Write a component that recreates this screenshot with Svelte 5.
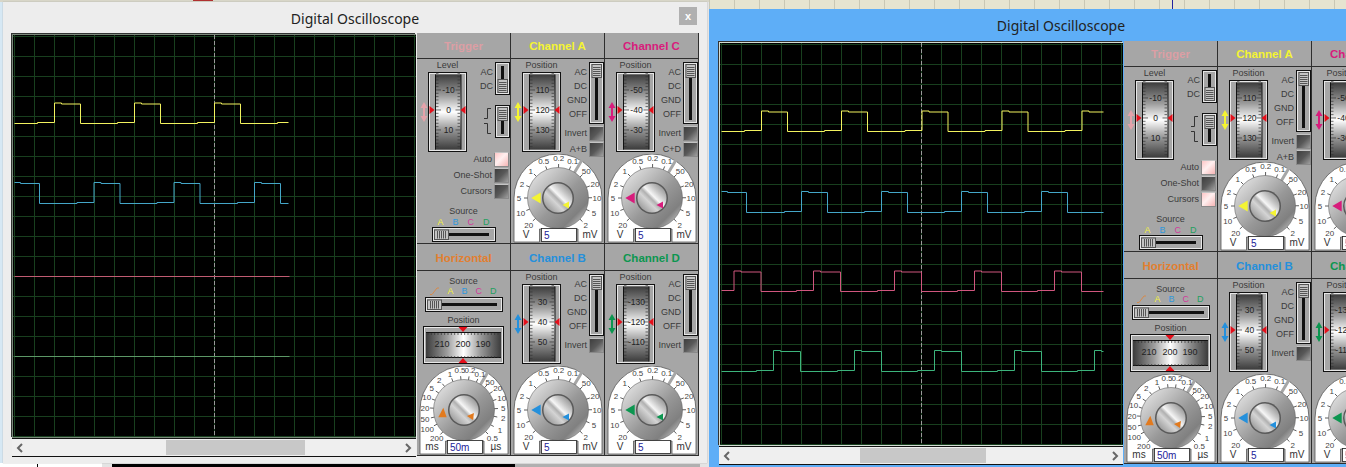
<script>
  const dialLabels = [
    ['0.5',-14.3,-36.7],['0.2',.7,-39.7],['0.1',14.7,-36.7],['1',-27.3,-27.3],['2',-36,-14],['5',-39,0],['10',-37.3,14.7],['20',-29.3,26.7],
    ['50',28.3,-27],['20',37,-14],['10',39,-.3],['5',36,14.7],['2',27.7,26.7]
  ];
  const timeLabels = [
    ['0.5',-4,-40],['0.2',6,-40],['1',-14,-36],['2',-24.7,-30],['5',-32.3,-21.7],['10',-37.3,-12.7],['20',-39,-2.3],['50',-39,9.3],['100',-36.7,19.3],['200',-27.3,28.3],
    ['0.1',16,-36],['50',26,-28.3],['20',33.7,-21.7],['10',37.7,-12.3],['5',39.3,-1.7],['2',39.3,8.3],['1',36,20],['0.5',28.3,28.3]
  ];
  const tick = (x, y, a, b) => { const l = Math.hypot(x, y); return [47+x/l*a, 44+y/l*a, 47+x/l*b, 44+y/l*b]; };

  const bigLeft = '20.3,44 29.7,38.5 29.7,49.5';
  const smallRight = '51.5,51 58,47.5 58,54.5';
  const bigUp = '26.3,41.7 21.3,51.3 29.7,51.3';
  const smallUp = '50,50 57,47 56,54';

  const hGrid = Array.from({ length: 21 }, (_, i) => i * 20 + 1.5);

  function wave(rises, lo, hi, x0, x1, fall = 26) {
    const p = [];
    for (const r of rises) p.push([r-17,lo],[r-17,lo-1],[r,lo-1],[r,hi],[r+7,hi],[r+7,hi+1],[r+fall,hi+1],[r+fall,lo]);
    const out = [];
    for (let i = 0; i < p.length; i++) {
      const [x, y] = p[i];
      if (x < x0 || x > x1) continue;
      if (!out.length) out.push([x0, i > 0 ? p[i-1][1] : y]);
      out.push([x, y]);
    }
    const last = out[out.length - 1];
    out.push([x1, last[1]]);
    return out;
  }
  const toLocal = (pts, ox, oy) => pts.map(([x, y]) => `${x-ox+.5},${y-oy+.5}`).join(' ');

  const traces1 = [
    { c: '#f2f25e', p: toLocal(wave([53,133,213,293],122,101.5,13,287),12,34) },
    { c: '#44a6c8', p: toLocal(wave([12,92.5,172.5,253],202,181,13,287),12,34) },
    { c: '#c05c72', p: toLocal([[13,275],[288,275]],12,34) },
    { c: '#5c9866', p: toLocal([[13,355],[288,355]],12,34) }
  ];
  const traces2 = [
    { c: '#f2f25e', p: toLocal(wave([760,840,920.5,1000.5,1080.5],130,109.5,720,1102),719,42) },
    { c: '#44a6c8', p: toLocal(wave([719,800,880,960,1040],211,190,720,1102),719,42) },
    { c: '#d0567e', p: toLocal(wave([732.5,812,893,973,1053],290,269.5,720,1102,27),719,42) },
    { c: '#3cb47c', p: toLocal(wave([772,853,933,1013,1093],370,349,720,1102,27),719,42) }
  ];
  const ticks = Array.from({ length: 23 }, (_, i) => i * 10 / 3 + 1);
  const windows = [
    { cls: 'w1', traces: traces1, close: true, cursors: false },
    { cls: 'w2', traces: traces2, close: false, cursors: true }
  ];
  const channels = {
    A: { name: 'Channel A', color: '#f4f432', cls: 'ca', nums: ['110','120','130'], extra: 'A+B' },
    C: { name: 'Channel C', color: '#d81c7c', cls: 'cc', nums: ['-50','-40','-30'], extra: 'C+D' },
    B: { name: 'Channel B', color: '#2490dc', cls: 'cb', nums: ['30','40','50'], extra: '' },
    D: { name: 'Channel D', color: '#0c9650', cls: 'cd', nums: ['-130','-120','-110'], extra: '' }
  };
</script>

{#snippet arrow(color)}
  <svg class="arrow" width="8" height="22" viewBox="0 0 8 22">
    <path d="M4 1 L7.5 7 H5 V15 H7.5 L4 21 L.5 15 H3 V7 H.5 Z" fill={color} />
  </svg>
{/snippet}

{#snippet drum(nums)}
  <svg class="drum" width="39" height="80" viewBox="0 0 39 80">
    <rect x=".5" y=".5" width="38" height="79" fill="#a6a6a6" stroke="#111" />
    <rect x="1.5" y="1.5" width="36" height="77" fill="none" stroke="#e8e8e8" />
    <rect x="7" y="2.5" width="26" height="75" fill="url(#drumV)" />
    <path d="M7.5 2.5 V77.5 M33 2.5 V77.5" stroke="#111" />
    {#each ticks as t, i}
      <path d="M8 {t+.3} H{i % 6 === 5 ? 13 : 10.5} M32 {t+.3} H{i % 6 === 5 ? 27.5 : 29.5}" stroke="#333" stroke-width=".7" />
    {/each}
    {#each nums as n, i}
      <text x="20.5" y={20.5 + i * 20.2} class="num">{n}</text>
    {/each}
    <path d="M1.5 34 L6.5 38 L1.5 42 Z M37.5 34 L32.5 38 L37.5 42 Z" fill="#e40f1a" />
  </svg>
{/snippet}

{#snippet vswitch(h, top)}
  <svg class="sw" width="15" height={h} viewBox="0 0 15 {h}">
    <rect x=".5" y=".5" width="14" height={h-1} fill="#a6a6a6" stroke="#111" />
    <rect x="1.5" y="1.5" width="12" height={h-3} fill="none" stroke="#e8e8e8" />
    <rect x="6" y="4" width="3" height={h-8} fill="#111" />
    <g transform="translate(2.5 {top ? 2 : h-16})">
      <rect x=".5" y=".5" width="9.5" height="13" fill="#c4c4c4" stroke="#555" />
      {#each [3,5,7,9,11] as y}<path d="M1.5 {y+.5} H9" stroke="#555" />{/each}
    </g>
  </svg>
{/snippet}

{#snippet hswitch(w, end)}
  <svg class="hsw" width={w} height="15" viewBox="0 0 {w} 15">
    <rect x=".5" y=".5" width={w-1} height="14" fill="#a6a6a6" stroke="#111" />
    <rect x="1.5" y="1.5" width={w-3} height="12" fill="none" stroke="#e8e8e8" />
    <rect x="10" y="6" width={end-10} height="3" fill="#111" />
    <g transform="translate(2 2.5)">
      <rect x=".5" y=".5" width="14" height="9.5" fill="#c4c4c4" stroke="#555" />
      {#each [3,5,7,9,11] as x}<path d="M{x+.5} 1.5 V9" stroke="#555" />{/each}
    </g>
  </svg>
{/snippet}

{#snippet knob(color, labels, left, right, value, big, small)}
  <svg class="knob" width="93" height="89" viewBox="0 0 93 89">
    <path d="M3 88 V44 A44 44 0 0 1 91 44 V88 H67 V75 H28.5 V88 Z" fill="#fff" stroke="#555" stroke-width=".8" />
    <path d="M62 21 L71 6" stroke="#a6a6a6" stroke-width="3" />
    {#each labels as [t, x, y]}
      {@const k = tick(x, y, 30, 34)}
      <line x1={k[0]} y1={k[1]} x2={k[2]} y2={k[3]} stroke="#333" stroke-width=".8" />
      <text x={47+x} y={44+y+2.8} class="dial">{t}</text>
    {/each}
    <circle cx="47" cy="44" r="30.5" fill="url(#knobBody)" stroke="#666" stroke-width=".6" />
    <circle cx="47" cy="44" r="16" fill="#5a5a5a" />
    <circle cx="47" cy="44" r="14.5" fill="url(#knobCap)" />
    <polygon points={big} fill={color} />
    <polygon points={small} fill={color} />
    <rect x="30.5" y="74.5" width="35" height="13" fill="#fff" stroke="#222" stroke-width=".8" />
    <text x="33" y="85" class="value">{value}</text>
    <text x="15" y="84" class="unit">{left}</text>
    <text x="79" y="84" class="unit">{right}</text>
  </svg>
{/snippet}

{#snippet channel(c)}
  <div class="cell body chan">
    <div class="top">
      <div class="leftcol">
        <div class="cap">Position</div>
        <div class="sliderrow">{@render arrow(c.color)}{@render drum(c.nums)}</div>
      </div>
      <div class="ctrl">
        <div class="opts"><span>AC</span><span>DC</span><span>GND</span><span>OFF</span></div>
        {@render vswitch(62, true)}
        <span class="lab">Invert</span><span class="btn"></span>
        {#if c.extra}<span class="lab">{c.extra}</span><span class="btn"></span>{/if}
      </div>
    </div>
    {@render knob(c.color, dialLabels, 'V', 'mV', '5', bigLeft, smallRight)}
  </div>
{/snippet}

{#snippet osc(w)}
  <section class="window {w.cls}">
    <header class="title">
      <span>Digital Oscilloscope</span>
      {#if w.close}<span class="close">x</span>{/if}
    </header>
    <div class="content">
      <div class="screen">
        <div class="scope">
          <svg width="403" height="402" viewBox="0 0 403 402">
            <rect width="403" height="402" fill="#000" />
            {#each hGrid as g}
              <path d="M{g} 0 V402 M0 {g} H403" stroke="#183f1e" />
            {/each}
            <path d="M201.5 0 V402" stroke="#999" stroke-dasharray="4 2" />
            {#each w.traces as t}
              <polyline points={t.p} fill="none" stroke={t.c} />
            {/each}
          </svg>
        </div>
        <div class="scrollbar">
          <svg class="chev" width="8" height="10" viewBox="0 0 8 10"><path d="M6 1 L2 5 L6 9" fill="none" stroke="#666" stroke-width="2" /></svg>
          <div class="track"><div class="thumb"></div></div>
          <svg class="chev" width="8" height="10" viewBox="0 0 8 10"><path d="M2 1 L6 5 L2 9" fill="none" stroke="#666" stroke-width="2" /></svg>
        </div>
      </div>

      <div class="panel">
        <div class="cell head" style:color="#dc9ea4">Trigger</div>
        <div class="cell head" style:color={channels.A.color}>{channels.A.name}</div>
        <div class="cell head" style:color={channels.C.color}>{channels.C.name}</div>

        <div class="cell body trig">
          <div class="top trigtop">
            <div class="leftcol">
              <div class="cap">Level</div>
              <div class="sliderrow">{@render arrow('#e4a2aa')}{@render drum(['-10','0','10'])}</div>
            </div>
            <div class="ctrl">
              <div class="opts two"><span>AC</span><span>DC</span></div>
              {@render vswitch(33, false)}
              <svg class="edges" width="7" height="27" viewBox="0 0 7 27"><path d="M0 10.5 H3.5 V.5 H7 M0 15.5 H3.5 V25.5 H7" fill="none" stroke="#333" /></svg>
              {@render vswitch(33, true)}
            </div>
          </div>
          <div class="actions">
            <div class="action"><span class="lab">Auto</span><span class="btn on"></span></div>
            <div class="action"><span class="lab">One-Shot</span><span class="btn"></span></div>
            <div class="action"><span class="lab">Cursors</span><span class={w.cursors ? 'btn on' : 'btn'}></span></div>
          </div>
          <div class="source trigsrc">
            <div class="cap">Source</div>
            <div class="letters"><b class="la">A</b><b class="lb">B</b><b class="lc">C</b><b class="ld">D</b></div>
            {@render hswitch(64, 57)}
          </div>
        </div>
        {@render channel(channels.A)}
        {@render channel(channels.C)}

        <div class="cell head row2" style:color="#e27f30">Horizontal</div>
        <div class="cell head row2" style:color={channels.B.color}>{channels.B.name}</div>
        <div class="cell head row2" style:color={channels.D.color}>{channels.D.name}</div>

        <div class="cell body horiz">
          <div class="source horizsrc">
            <div class="cap">Source</div>
            <div class="letters hl">
              <svg width="9" height="8" viewBox="0 0 9 8"><path d="M0 7.5 H2 L7 1 H9" fill="none" stroke="#d58a4c" /></svg>
              <b class="la">A</b><b class="lb">B</b><b class="lc">C</b><b class="ld">D</b>
            </div>
            {@render hswitch(78, 72)}
            <div class="cap poscap">Position</div>
            <svg class="hdrum" width="81" height="38" viewBox="0 0 81 38">
              <rect x=".5" y=".5" width="80" height="37" fill="#a6a6a6" stroke="#111" />
              <rect x="1.5" y="1.5" width="78" height="35" fill="none" stroke="#e8e8e8" />
              <rect x="3" y="7" width="75" height="25" fill="url(#drumH)" />
              <path d="M3 6.5 H78 M3 31.5 H78" stroke="#111" />
              {#each Array.from({ length: 22 }, (_, i) => i * 10 / 3 + 5) as t}
                <path d="M{t} 7 V9 M{t} 30 V32" stroke="#333" stroke-width=".7" />
              {/each}
              <text x="19" y="21" class="num big">210</text>
              <text x="40" y="21" class="num big">200</text>
              <text x="60" y="21" class="num big">190</text>
              <path d="M35.5 1 H44.5 L40 6 Z M35.5 37 H44.5 L40 32 Z" fill="#e40f1a" />
            </svg>
          </div>
          {@render knob('#e27a1e', timeLabels, 'ms', 'µs', '50m', bigUp, smallUp)}
        </div>
        {@render channel(channels.B)}
        {@render channel(channels.D)}
      </div>
    </div>
  </section>
{/snippet}

<div class="stage">
  <svg class="defs" width="0" height="0" aria-hidden="true">
    <defs>
      <linearGradient id="drumV" x1="0" y1="0" x2="0" y2="1">
        <stop offset="0" stop-color="#3c3c3c" /><stop offset=".28" stop-color="#9c9c9c" /><stop offset=".5" stop-color="#fff" /><stop offset=".72" stop-color="#9c9c9c" /><stop offset="1" stop-color="#3c3c3c" />
      </linearGradient>
      <linearGradient id="drumH" x1="0" y1="0" x2="1" y2="0">
        <stop offset="0" stop-color="#3c3c3c" /><stop offset=".28" stop-color="#9c9c9c" /><stop offset=".5" stop-color="#fff" /><stop offset=".72" stop-color="#9c9c9c" /><stop offset="1" stop-color="#3c3c3c" />
      </linearGradient>
      <linearGradient id="knobBody" x1=".1" y1=".1" x2=".9" y2=".9">
        <stop offset="0" stop-color="#e0e0e0" /><stop offset=".55" stop-color="#989898" /><stop offset=".85" stop-color="#808080" /><stop offset="1" stop-color="#bcbcbc" />
      </linearGradient>
      <linearGradient id="knobCap" x1=".1" y1=".9" x2=".9" y2=".1">
        <stop offset="0" stop-color="#969696" /><stop offset=".35" stop-color="#d4d4d4" /><stop offset=".47" stop-color="#b0b0b0" /><stop offset=".57" stop-color="#f6f6f6" /><stop offset=".75" stop-color="#c8c8c8" /><stop offset="1" stop-color="#909090" />
      </linearGradient>
    </defs>
  </svg>
  <div class="desk topband"></div>
  <div class="desk topline"></div>
  <div class="desk redmark"></div>
  <div class="desk leftstrip"></div>
  <div class="desk whitebit"></div>
  <div class="desk blackbit"></div>
  <div class="desk scopebit"></div>
  <div class="desk panelbit"></div>
  <div class="desk vline"></div>
  {#each windows as w}{@render osc(w)}{/each}
</div>

<style>
  :global(body) { margin: 0; overflow: hidden; background: #e6e6e6; }
  .stage { position: relative; width: 1346px; height: 467px; overflow: hidden; background: #e4e4e4; font-family: "Liberation Sans", Arial, sans-serif; }
  .defs { display: block; }
  .desk { position: absolute; }
  .topband { left: 709px; top: 0; width: 637px; height: 9px; background-color: #e6e4d0; background-image: repeating-linear-gradient(90deg, #c9c7b4 0 1px, transparent 1px 25px); }
  .topline { left: 0; top: 0; width: 709px; height: 2px; background: #d8d6c8; }
  .redmark { left: 193px; top: 0; width: 20px; height: 1px; background: #b03030; }
  .leftstrip { left: 0; top: 2px; width: 3px; height: 465px; background: #d6e8f4; }
  .whitebit { left: 0; top: 463px; width: 102px; height: 4px; background: #fff; }
  .blackbit { left: 37px; top: 464px; width: 1px; height: 3px; background: #000; }
  .scopebit { left: 112px; top: 464px; width: 403px; height: 3px; background: #000; }
  .panelbit { left: 515px; top: 464px; width: 185px; height: 3px; background: #b0b0b0; }
  .vline { left: 1172px; top: 0; width: 1px; height: 9px; background: #2222a0; }

  .window { position: absolute; display: flex; flex-direction: column; }
  .w1 { left: 3px; top: 2px; width: 704px; height: 461px; background: #ededed; box-shadow: 0 0 1px #999; }
  .w2 { left: 709px; top: 9px; width: 704px; height: 470px; background: #5eaef7; }
  .title { position: relative; display: flex; justify-content: center; align-items: center; height: 32px; flex: none; font-family: "Noto Sans", sans-serif; font-size: 14px; color: #222; }
  .w2 .title { height: 33px; }
  .close { position: absolute; right: 10px; top: 5px; width: 18px; height: 18px; display: flex; align-items: center; justify-content: center; background: #b0b0b0; color: #fff; font: bold 11px "Liberation Sans", sans-serif; }
  .content { display: flex; align-items: flex-start; padding-left: 9px; gap: 1px; }
  .w2 .content { padding-left: 10px; }
  .screen { width: 404px; flex: none; }
  .scope { height: 404px; box-sizing: border-box; border: 1px solid #7c8a7c; box-shadow: -1px -1px 0 #333; }
  .w2 .scope { border-color: #d4dcd4; }
  .scope svg { display: block; }
  .scrollbar { display: flex; align-items: center; height: 17px; background: #efefef; border-top: 1px solid #111; border-bottom: 1px solid #111; box-sizing: content-box; }
  .chev { flex: none; margin: 0 4px; }
  .track { flex: 1; align-self: stretch; padding: 1px 0; }
  .thumb { height: 100%; box-sizing: border-box; background: #c8c8c8; }
  .w1 .thumb { width: 139px; margin-left: 138px; }
  .w2 .thumb { width: 126px; margin-left: 125px; }

  .panel { flex: none; margin-top: -1px; display: grid; grid-template-columns: repeat(3, 93px); grid-template-rows: 25px 184px 26px 184px; gap: 1px; padding: 0 1px 1px 0; background: #2e2e2e; }
  .cell { background: #a6a6a6; }
  .head { display: flex; align-items: center; justify-content: center; font-weight: bold; font-size: 11.5px; }
  .row2 { padding-top: 1px; }
  .body { font-size: 9px; color: #3a3a3a; min-width: 0; }
  .top { display: flex; height: 95px; }
  .trigtop { height: 93px; }
  .leftcol { width: 52px; flex: none; }
  .cap { height: 13px; line-height: 13px; text-align: center; font-size: 9px; }
  .leftcol .cap { width: 39px; margin-left: 11px; }
  .sliderrow { display: flex; align-items: center; }
  .arrow { flex: none; margin-left: 3px; }
  .drum { flex: none; display: block; }
  .num { font-size: 8.5px; fill: #222; text-anchor: middle; }
  .big { font-size: 9px; }
  .ctrl { flex: 1; display: grid; grid-template-columns: 1fr 15px; grid-auto-rows: 16px; grid-template-rows: 64px; column-gap: 2px; padding-top: 3px; align-content: start; }
  .trigtop .ctrl { grid-template-rows: 43px 33px; }
  .opts { display: flex; flex-direction: column; align-items: flex-end; padding-top: 3px; }
  .opts span { height: 14px; line-height: 14px; }
  .sw, .hsw, .hdrum, .knob, .edges { display: block; }
  .edges { justify-self: end; align-self: center; margin-right: 2px; }
  .lab { text-align: right; line-height: 15px; }
  .btn { display: block; width: 15px; height: 15px; box-sizing: border-box; border: 1px solid #8a8a8a; border-top-color: #c4c4c4; background: linear-gradient(135deg, #3e3e3e, #585858 50%, #a0a0a0); }
  .btn.on { background: linear-gradient(135deg, #ffc6c6, #fff0f0 45%, #f6b4b4); }
  .actions { display: flex; flex-direction: column; align-items: flex-end; padding-right: 1px; }
  .action { display: flex; gap: 2px; height: 16px; }
  .source { display: flex; flex-direction: column; align-items: center; }
  .trigsrc { margin-top: 5px; }
  .trigsrc .cap { height: 12px; line-height: 12px; }
  .letters { display: flex; gap: 9px; height: 10px; line-height: 10px; font-size: 9px; }
  .letters b { font-weight: normal; }
  .hl { gap: 8px; align-items: center; height: 9px; margin: -1px 0 2px; }
  .la { color: #f2f040; }
  .lb { color: #2f98dc; }
  .lc { color: #d2389c; }
  .ld { color: #24a060; }
  .horizsrc { height: 95px; padding-top: 4px; box-sizing: border-box; }
  .horizsrc > .cap { height: 12px; line-height: 12px; }
  .poscap { margin-top: 2px; }
  .dial { font-size: 8px; fill: #444; text-anchor: middle; }
  .unit { font-size: 10px; fill: #333; text-anchor: middle; }
  .value { font-size: 10px; fill: #22229a; }
</style>
